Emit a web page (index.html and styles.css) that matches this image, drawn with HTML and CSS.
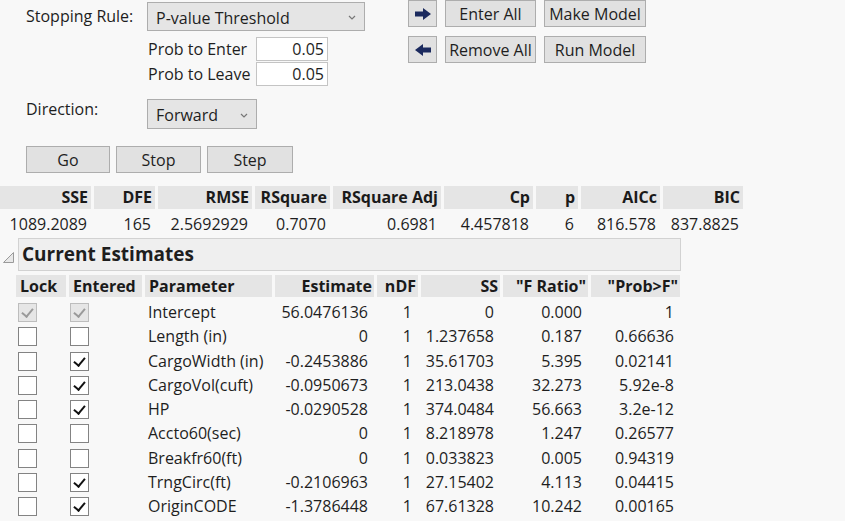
FILE: index.html
```html
<!DOCTYPE html>
<html lang="en">
<head>
    <meta charset="UTF-8">
    <title>Stepwise Fit</title>
    <link rel="stylesheet" href="styles.css">
</head>
<body>
    <div class="top">
        <div class="controls">
            <div class="row">
                <span class="label rule-label">Stopping Rule:</span>
                <div class="select rule-select">
                    P-value Threshold
                    <svg class="chev" width="8" height="5" viewBox="0 0 8 5"><polyline points="1,1 4,4 7,1"/></svg>
                </div>
            </div>
            <div class="probs">
                <div class="prob"><span class="prob-label">Prob to Enter</span><span class="input">0.05</span></div>
                <div class="prob"><span class="prob-label">Prob to Leave</span><span class="input">0.05</span></div>
            </div>
            <div class="row dir-row">
                <span class="label">Direction:</span>
                <div class="select dir-select">
                    Forward
                    <svg class="chev" width="8" height="5" viewBox="0 0 8 5"><polyline points="1,1 4,4 7,1"/></svg>
                </div>
            </div>
            <div class="actions">
                <button class="btn go">Go</button>
                <button class="btn stop">Stop</button>
                <button class="btn step">Step</button>
            </div>
        </div>

        <div class="model-btns">
            <button class="btn arrow">
                <svg width="18" height="12" viewBox="0 0 18 12"><polygon points="1,3.5 9,3.5 9,0 17,6 9,12 9,8.5 1,8.5"/></svg>
            </button>
            <button class="btn">Enter All</button>
            <button class="btn">Make Model</button>
            <button class="btn arrow">
                <svg width="18" height="12" viewBox="0 0 18 12"><polygon points="17,3.5 9,3.5 9,0 1,6 9,12 9,8.5 17,8.5"/></svg>
            </button>
            <button class="btn">Remove All</button>
            <button class="btn">Run Model</button>
        </div>
    </div>

    <div class="stats">
        <div class="th">SSE</div>
        <div class="th">DFE</div>
        <div class="th">RMSE</div>
        <div class="th">RSquare</div>
        <div class="th">RSquare Adj</div>
        <div class="th">Cp</div>
        <div class="th">p</div>
        <div class="th">AICc</div>
        <div class="th">BIC</div>
        <div class="td">1089.2089</div>
        <div class="td">165</div>
        <div class="td">2.5692929</div>
        <div class="td">0.7070</div>
        <div class="td">0.6981</div>
        <div class="td">4.457818</div>
        <div class="td">6</div>
        <div class="td">816.578</div>
        <div class="td">837.8825</div>
    </div>

    <div class="outline">
        <svg class="tri" width="13" height="13" viewBox="0 0 13 13"><polygon points="1.5,11.5 11.5,1.5 11.5,11.5"/></svg>
        <div class="outline-title">Current Estimates</div>
    </div>

    <div class="estimates">
        <div class="th txt-left">Lock</div>
        <div class="th txt-left">Entered</div>
        <div class="th txt-left">Parameter</div>
        <div class="th">Estimate</div>
        <div class="th">nDF</div>
        <div class="th">SS</div>
        <div class="th">"F Ratio"</div>
        <div class="th">"Prob&gt;F"</div>

        <div class="td"><span class="box off on"></span></div>
        <div class="td"><span class="box off on"></span></div>
        <div class="td txt-left">Intercept</div>
        <div class="td">56.0476136</div>
        <div class="td">1</div>
        <div class="td">0</div>
        <div class="td">0.000</div>
        <div class="td">1</div>

        <div class="td"><span class="box"></span></div>
        <div class="td"><span class="box"></span></div>
        <div class="td txt-left">Length (in)</div>
        <div class="td">0</div>
        <div class="td">1</div>
        <div class="td">1.237658</div>
        <div class="td">0.187</div>
        <div class="td">0.66636</div>

        <div class="td"><span class="box"></span></div>
        <div class="td"><span class="box on"></span></div>
        <div class="td txt-left">CargoWidth (in)</div>
        <div class="td">-0.2453886</div>
        <div class="td">1</div>
        <div class="td">35.61703</div>
        <div class="td">5.395</div>
        <div class="td">0.02141</div>

        <div class="td"><span class="box"></span></div>
        <div class="td"><span class="box on"></span></div>
        <div class="td txt-left">CargoVol(cuft)</div>
        <div class="td">-0.0950673</div>
        <div class="td">1</div>
        <div class="td">213.0438</div>
        <div class="td">32.273</div>
        <div class="td">5.92e-8</div>

        <div class="td"><span class="box"></span></div>
        <div class="td"><span class="box on"></span></div>
        <div class="td txt-left">HP</div>
        <div class="td">-0.0290528</div>
        <div class="td">1</div>
        <div class="td">374.0484</div>
        <div class="td">56.663</div>
        <div class="td">3.2e-12</div>

        <div class="td"><span class="box"></span></div>
        <div class="td"><span class="box"></span></div>
        <div class="td txt-left">Accto60(sec)</div>
        <div class="td">0</div>
        <div class="td">1</div>
        <div class="td">8.218978</div>
        <div class="td">1.247</div>
        <div class="td">0.26577</div>

        <div class="td"><span class="box"></span></div>
        <div class="td"><span class="box"></span></div>
        <div class="td txt-left">Breakfr60(ft)</div>
        <div class="td">0</div>
        <div class="td">1</div>
        <div class="td">0.033823</div>
        <div class="td">0.005</div>
        <div class="td">0.94319</div>

        <div class="td"><span class="box"></span></div>
        <div class="td"><span class="box on"></span></div>
        <div class="td txt-left">TrngCirc(ft)</div>
        <div class="td">-0.2106963</div>
        <div class="td">1</div>
        <div class="td">27.15402</div>
        <div class="td">4.113</div>
        <div class="td">0.04415</div>

        <div class="td"><span class="box"></span></div>
        <div class="td"><span class="box on"></span></div>
        <div class="td txt-left">OriginCODE</div>
        <div class="td">-1.3786448</div>
        <div class="td">1</div>
        <div class="td">67.61328</div>
        <div class="td">10.242</div>
        <div class="td">0.00165</div>
    </div>
</body>
</html>
```

FILE: styles.css
```css
* {
    margin: 0;
    padding: 0;
    box-sizing: border-box;
}

body {
    font-family: 'Open Sans', 'Noto Sans', sans-serif;
    font-size: 16px;
    color: #1e1e1e;
    background: #f8f8f8;
    overflow: hidden;
}

/* Top controls */
.top {
    display: flex;
    align-items: flex-start;
    height: 172px;
}

.controls {
    margin-left: 26px;
    margin-top: 2px;
}

.row {
    display: flex;
    align-items: flex-start;
}

.label {
    width: 121px;
    line-height: 20px;
}

.rule-label {
    padding-top: 4px;
}

.select {
    display: flex;
    align-items: center;
    justify-content: space-between;
    height: 29px;
    padding: 2px 8px 0 8px;
    background: #e5e5e5;
    border: 1px solid #adadad;
}

.rule-select {
    width: 218px;
}

.dir-row {
    margin-top: 13px;
}

.dir-select {
    width: 110px;
    height: 30px;
}

.chev {
    fill: none;
    stroke: #777;
    stroke-width: 1.2;
}

.probs {
    margin-left: 122px;
    margin-top: 5px;
}

.prob {
    display: flex;
    align-items: center;
    height: 25px;
}

.prob-label {
    width: 108px;
}

.input {
    width: 72px;
    height: 24px;
    line-height: 22px;
    text-align: right;
    padding-right: 3px;
    background: #fff;
    border: 1px solid #c4c4c4;
}

.actions {
    display: flex;
    gap: 6px;
    margin-top: 17px;
}

.btn {
    font-family: inherit;
    font-size: 16px;
    color: #1e1e1e;
    height: 27px;
    background: #e1e1e1;
    border: 1px solid #adadad;
    padding: 0;
    white-space: nowrap;
}

.go { width: 84px; }
.stop { width: 85px; }
.step { width: 86px; }

.model-btns {
    display: grid;
    grid-template-columns: 29px 91px 102px;
    grid-auto-rows: 27px;
    column-gap: 8px;
    row-gap: 9px;
    margin-left: 43px;
}

.arrow {
    display: flex;
    align-items: center;
    justify-content: center;
}

.arrow svg {
    fill: #1b2a5e;
}

/* Summary stats */
.stats {
    display: grid;
    grid-template-columns: 91px 61px 94px 75px 108px 89px 42px 79px 80px;
    column-gap: 3px;
    margin-top: 14px;
}

.th {
    background: #e5e5e5;
    font-size: 16px;
    font-weight: 700;
    color: #1a1a1a;
    text-align: right;
    padding-right: 3px;
    height: 23px;
    line-height: 23px;
    white-space: nowrap;
}

.td {
    text-align: right;
    padding-right: 4px;
    white-space: nowrap;
}

.stats .td {
    height: 29px;
    line-height: 30px;
}

/* Outline header */
.outline {
    display: flex;
    align-items: center;
    height: 33px;
}

.tri {
    margin-left: 2px;
    margin-right: 3px;
    margin-top: 6px;
    fill: #e8e8e8;
    stroke: #9a9a9a;
    stroke-width: 1;
}

.outline-title {
    width: 663px;
    height: 33px;
    background: #efefef;
    border: 1px solid #d2d2d2;
    font-size: 19px;
    font-weight: 700;
    line-height: 30px;
    padding-left: 3px;
}

/* Estimates table */
.estimates {
    display: grid;
    grid-template-columns: 50px 73px 127px 99px 41px 79px 85px 89px;
    grid-template-rows: 25px;
    grid-auto-rows: 24.25px;
    column-gap: 3px;
    margin-left: 16px;
    margin-top: 4px;
}

.estimates .th {
    height: 22px;
    line-height: 22px;
    padding-right: 2px;
}

.estimates .th.txt-left {
    text-align: left;
    padding-left: 4px;
}

.estimates .td {
    line-height: 24px;
    padding-right: 6px;
}

.estimates .td.txt-left {
    text-align: left;
    padding-left: 3px;
}

.box {
    display: block;
    position: relative;
    width: 19px;
    height: 19px;
    margin: 3px 0 0 2px;
    background: #fff;
    border: 1px solid #838383;
}

.estimates .td:nth-child(8n+2) .box {
    margin-left: 1px;
}

.box.on::after {
    content: '';
    position: absolute;
    left: 5px;
    top: 2px;
    width: 5px;
    height: 9px;
    border-right: 2px solid #111;
    border-bottom: 2px solid #111;
    transform: rotate(40deg);
}

.box.off {
    background: #e6e6e6;
    border-color: #bdbdbd;
}

.box.off::after {
    border-color: #9a9a9a;
}
```
